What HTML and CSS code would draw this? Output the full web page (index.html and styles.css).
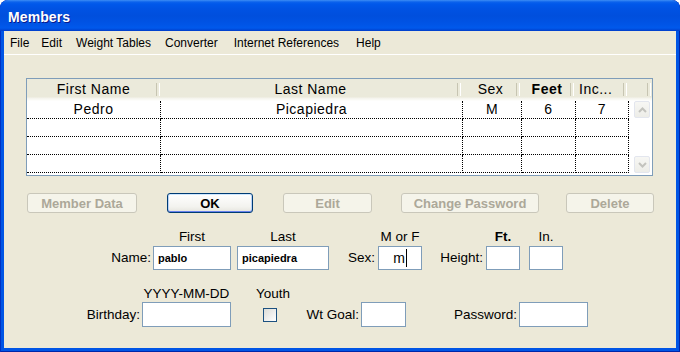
FILE: index.html
```html
<!DOCTYPE html>
<html>
<head>
<meta charset="utf-8">
<title>Members</title>
<link rel="stylesheet" href="styles.css">
</head>
<body>
<div class="window">
  <div class="titlebar"><span class="title">Members</span></div>
  <div class="client">
    <div class="menubar">
      <span class="menu-item">File</span>
      <span class="menu-item">Edit</span>
      <span class="menu-item">Weight Tables</span>
      <span class="menu-item">Converter</span>
      <span class="menu-item">Internet References</span>
      <span class="menu-item">Help</span>
    </div>
    <div class="content">
      <div class="grid">
        <div class="thead">
          <div class="th h1">First Name</div>
          <div class="th h2">Last Name</div>
          <div class="th h3">Sex</div>
          <div class="th h4 bold">Feet</div>
          <div class="th h5 left">Inc...</div>
          <div class="th h6"></div>
        </div>
        <div class="tbody">
          <div class="rows">
            <div class="row">
              <div class="td c1">Pedro</div>
              <div class="td c2">Picapiedra</div>
              <div class="td c3">M</div>
              <div class="td c4">6</div>
              <div class="td c5">7</div>
            </div>
            <div class="row">
              <div class="td c1"></div><div class="td c2"></div><div class="td c3"></div><div class="td c4"></div><div class="td c5"></div>
            </div>
            <div class="row">
              <div class="td c1"></div><div class="td c2"></div><div class="td c3"></div><div class="td c4"></div><div class="td c5"></div>
            </div>
            <div class="row">
              <div class="td c1"></div><div class="td c2"></div><div class="td c3"></div><div class="td c4"></div><div class="td c5"></div>
            </div>
          </div>
          <div class="scrollbar">
            <div class="sb-btn">
              <svg width="9" height="6" viewBox="0 0 9 6"><path d="M1 5 L4.5 1.5 L8 5" fill="none" stroke="#C3C3BE" stroke-width="2"/></svg>
            </div>
            <div class="sb-btn">
              <svg width="9" height="6" viewBox="0 0 9 6"><path d="M1 1 L4.5 4.5 L8 1" fill="none" stroke="#C3C3BE" stroke-width="2"/></svg>
            </div>
          </div>
        </div>
      </div>

      <div class="buttons">
        <div class="btn disabled b-member">Member Data</div>
        <div class="btn default b-ok">OK</div>
        <div class="btn disabled b-edit">Edit</div>
        <div class="btn disabled b-pass">Change Password</div>
        <div class="btn disabled b-delete">Delete</div>
      </div>

      <div class="form-row row1">
        <div class="lbl l-name">Name:</div>
        <div class="field f-first">
          <div class="caption">First</div>
          <div class="input small">pablo</div>
        </div>
        <div class="field f-last">
          <div class="caption">Last</div>
          <div class="input small">picapiedra</div>
        </div>
        <div class="lbl l-sex">Sex:</div>
        <div class="field f-sex">
          <div class="caption">M or F</div>
          <div class="input center">m<span class="caret"></span></div>
        </div>
        <div class="lbl l-height">Height:</div>
        <div class="field f-ft">
          <div class="caption bold">Ft.</div>
          <div class="input"></div>
        </div>
        <div class="field f-in">
          <div class="caption">In.</div>
          <div class="input"></div>
        </div>
      </div>

      <div class="form-row row2">
        <div class="lbl l-birth">Birthday:</div>
        <div class="field f-birth">
          <div class="caption">YYYY-MM-DD</div>
          <div class="input tall"></div>
        </div>
        <div class="field f-youth">
          <div class="caption">Youth</div>
          <div class="check-wrap"><span class="checkbox"></span></div>
        </div>
        <div class="lbl l-wt">Wt Goal:</div>
        <div class="input tall i-wt"></div>
        <div class="lbl l-pass">Password:</div>
        <div class="input tall i-pass"></div>
      </div>
    </div>
  </div>
</div>
</body>
</html>
```

FILE: styles.css
```css
* { box-sizing: border-box; }
html, body { margin: 0; padding: 0; background: #ffffff; }
body { font-family: "Liberation Sans", Arial, sans-serif; color: #000; }

.window {
  width: 680px;
  height: 352px;
  display: flex;
  flex-direction: column;
  background: #0055E5;
  border-radius: 8px 8px 0 0;
  box-shadow: inset 1px 0 #0031C4, inset -1px 0 #0026A8, inset 0 -1px #0026A8;
  overflow: hidden;
}

.titlebar {
  height: 31px;
  flex: none;
  border-radius: 8px 8px 0 0;
  background: linear-gradient(180deg, #3D8DF5 0px, #0B62EC 2px, #0058EA 4px, #0052E3 9px, #004FDD 16px, #0054E6 24px, #0059EC 28px, #0047D6 30px, #003CC8 31px);
  display: flex;
  align-items: center;
  padding-left: 8px;
  padding-top: 2px;
}
.title {
  color: #fff;
  font-weight: bold;
  font-size: 14px;
  letter-spacing: 0.1px;
  text-shadow: 1px 1px 0 #0A1A8A;
}

.client {
  flex: 1;
  margin: 0 4px 4px 4px;
  background: #ECE9D8;
  display: flex;
  flex-direction: column;
}

.menubar {
  height: 24px;
  flex: none;
  display: flex;
  align-items: center;
  border-bottom: 1px solid #FFFFFF;
  font-size: 12px;
  padding-top: 1px;
}
.menu-item { padding: 0 6px; }
.menu-item:nth-child(2) { padding-left: 6px; padding-right: 8px; }
.menu-item:nth-child(3) { padding-left: 6px; }
.menu-item:nth-child(4) { padding-left: 8px; padding-right: 8px; }
.menu-item:nth-child(5) { padding-left: 8px; padding-right: 11px; }

.content {
  flex: 1;
  padding-top: 23px;
}

/* table */
.grid {
  margin-left: 22px;
  width: 627px;
  height: 98px;
  border: 1px solid #7F9DB9;
  background: #fff;
}
.thead {
  display: flex;
  height: 22px;
  background: linear-gradient(180deg, #EBEADB 0, #EBEADB 18px, #F4F3EC 19px, #FBFBF7 21px, #FFFFFF 22px);
  font-size: 14px;
  letter-spacing: 0.5px;
}
.th {
  position: relative;
  height: 22px;
  line-height: 21px;
  text-align: center;
  white-space: nowrap;
  overflow: hidden;
}
.th::after {
  content: "";
  position: absolute;
  right: 0;
  top: 4px;
  height: 13px;
  width: 2px;
  border-left: 1px solid #C7C5B2;
  border-right: 1px solid #FFFFFF;
}
.th.h1 { width: 133px; }
.th.h2 { width: 301px; }
.th.h3 { width: 59px; }
.th.h4 { width: 54px; }
.th.h5 { width: 53px; }
.th.h6 { width: 25px; }
.th.h6::after { right: 1px; }
.th.left { text-align: left; padding-left: 5px; }
.bold { font-weight: bold; }

.tbody { display: flex; }
.rows { width: 602px; }
.row { display: flex; height: 18px; }
.td {
  height: 18px;
  line-height: 17px;
  font-size: 14px;
  letter-spacing: 0.5px;
  text-align: center;
  border-bottom: 1px dotted #000;
  border-right: 1px dotted #000;
}
.td.c1 { width: 134px; }
.td.c2 { width: 302px; }
.td.c3 { width: 59px; }
.td.c4 { width: 54px; }
.td.c5 { width: 53px; }

.scrollbar {
  width: 23px;
  height: 72px;
  display: flex;
  flex-direction: column;
  justify-content: space-between;
  padding-left: 5px;
  padding-right: 2px;
}
.sb-btn {
  width: 16px;
  height: 17px;
  border: 1px solid #E3E6EE;
  border-radius: 2px;
  background: linear-gradient(180deg, #F7F7F4, #EDEDE8);
  display: flex;
  align-items: center;
  justify-content: center;
}

/* buttons */
.buttons {
  display: flex;
  margin-top: 17px;
  margin-left: 23px;
}
.btn {
  height: 20px;
  border-radius: 3px;
  font-size: 13px;
  font-weight: bold;
  display: flex;
  align-items: center;
  justify-content: center;
}
.btn.disabled {
  border: 1px solid #C9C7BA;
  background: #F5F4EA;
  color: #ACA899;
}
.btn.default {
  border: 1px solid #003C74;
  background: linear-gradient(180deg, #FFFFFF, #F3F3EF 70%, #E6E5DE);
  box-shadow: inset 0 1px 0 #CEE7FF, inset 0 -1px 0 #6982EE, inset 1px 0 0 #B8D2F8, inset -1px 0 0 #B8D2F8;
  color: #000;
}
.b-member { width: 110px; }
.b-ok { width: 86px; margin-left: 30px; }
.b-edit { width: 89px; margin-left: 30px; }
.b-pass { width: 138px; margin-left: 29px; }
.b-delete { width: 88px; margin-left: 27px; }

/* form */
.form-row {
  display: flex;
  align-items: flex-end;
  font-size: 13.5px;
}
.row1 { margin-top: 16px; }
.row2 { margin-top: 16px; }

.lbl {
  text-align: right;
  white-space: nowrap;
  margin-right: 2px;
}
.row1 .lbl { height: 24px; line-height: 24px; }
.row2 .lbl { height: 25px; line-height: 26px; }

.field {
  display: flex;
  flex-direction: column;
  align-items: stretch;
}
.caption {
  height: 16px;
  line-height: 16px;
  text-align: center;
  white-space: nowrap;
}
.row1 .caption { margin-bottom: 1px; }

.input {
  height: 24px;
  border: 1px solid #7F9DB9;
  background: #fff;
  line-height: 22px;
  padding-left: 4px;
  font-size: 14px;
  white-space: nowrap;
}
.input.small { font-size: 11px; font-weight: bold; }
.input.center { text-align: center; padding-left: 0; }
.input.tall { height: 25px; }
.caret {
  display: inline-block;
  width: 1px;
  height: 18px;
  background: #000;
  vertical-align: middle;
  margin-left: 1px;
  margin-top: -3px;
}

.l-name { margin-left: 100px; width: 47px; }
.f-first { width: 78px; }
.f-last { width: 92px; margin-left: 6px; }
.l-sex { width: 46px; margin-right: 3px; }
.f-sex { width: 44px; }
.l-height { width: 61px; margin-right: 3px; }
.f-ft { width: 34px; }
.f-in { width: 34px; margin-left: 9px; }

.l-birth { margin-left: 76px; width: 60px; }
.f-birth { width: 89px; }
.f-youth { width: 40px; margin-left: 22px; }
.check-wrap {
  height: 25px;
  display: flex;
  align-items: center;
  padding-left: 10px;
}
.checkbox {
  width: 14px;
  height: 14px;
  border: 1px solid #1C5180;
  background: linear-gradient(135deg, #DCDCD7, #FFFFFF);
}
.l-wt { width: 66px; }
.i-wt { width: 45px; }
.l-pass { width: 111px; }
.i-pass { width: 69px; }
```
